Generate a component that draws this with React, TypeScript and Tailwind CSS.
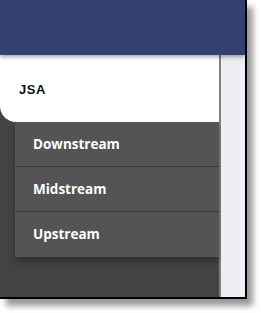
export default function App() {
  const items = ["Downstream", "Midstream", "Upstream"];

  return (
    <div className="w-[261px] h-[313px] bg-white overflow-hidden">
      <div className="w-[247px] h-[299px] flex flex-col border-r-2 border-b-2 border-black shadow-[6px_7px_6px_rgba(0,0,0,0.4)] overflow-hidden">
        <div className="h-[55px] bg-[#34416e] relative z-10 shadow-[0_2px_4px_rgba(0,0,0,0.35)]" />
        <div className="flex flex-1">
          <div className="w-[221px] bg-[#434343] border-r-2 border-[#808080] flex flex-col">
            <div className="h-[67px] bg-white rounded-bl-[16px] flex items-center pl-[19px] pt-[2px]">
              <span className="font-['Liberation_Sans',Arial,sans-serif] font-bold text-[13px] tracking-[0.5px] text-[#111]">
                JSA
              </span>
            </div>
            <div className="ml-[15px] flex flex-col shadow-[0_4px_6px_rgba(0,0,0,0.3)]">
              {items.map((label, i) => (
                <div
                  key={label}
                  className={
                    "h-[45px] bg-[#545454] flex items-center pl-[18px] " +
                    (i < items.length - 1 ? "border-b border-[#3a3a3a]" : "")
                  }
                >
                  <span className="font-['Open_Sans',sans-serif] font-bold text-[13.5px] text-white">
                    {label}
                  </span>
                </div>
              ))}
            </div>
          </div>
          <div className="flex-1 bg-[#eeeff4]" />
        </div>
      </div>
    </div>
  );
}
